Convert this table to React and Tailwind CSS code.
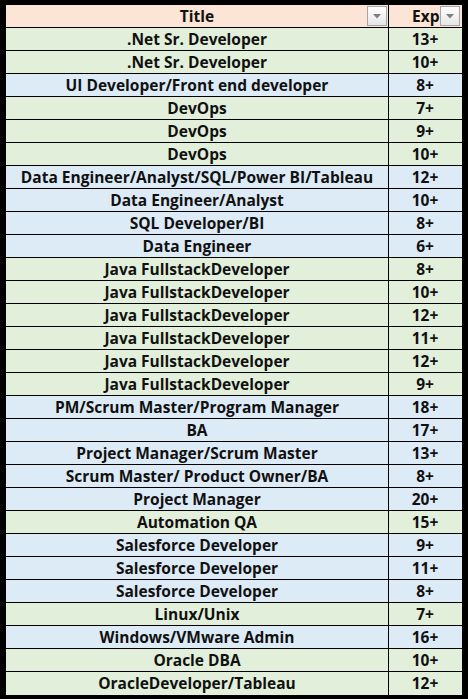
import React from "react";

const G = "bg-[#e2efda]";
const B = "bg-[#ddebf7]";

const rows = [
  [".Net Sr. Developer", "13+", G],
  [".Net Sr. Developer", "10+", G],
  ["UI Developer/Front end developer", "8+", B],
  ["DevOps", "7+", G],
  ["DevOps", "9+", G],
  ["DevOps", "10+", G],
  ["Data Engineer/Analyst/SQL/Power BI/Tableau", "12+", B],
  ["Data Engineer/Analyst", "10+", B],
  ["SQL Developer/BI", "8+", B],
  ["Data Engineer", "6+", B],
  ["Java FullstackDeveloper", "8+", G],
  ["Java FullstackDeveloper", "10+", G],
  ["Java FullstackDeveloper", "12+", G],
  ["Java FullstackDeveloper", "11+", G],
  ["Java FullstackDeveloper", "12+", G],
  ["Java FullstackDeveloper", "9+", G],
  ["PM/Scrum Master/Program Manager", "18+", B],
  ["BA", "17+", B],
  ["Project Manager/Scrum Master", "13+", B],
  ["Scrum Master/ Product Owner/BA", "8+", B],
  ["Project Manager", "20+", B],
  ["Automation QA", "15+", G],
  ["Salesforce Developer", "9+", B],
  ["Salesforce Developer", "11+", B],
  ["Salesforce Developer", "8+", B],
  ["Linux/Unix", "7+", G],
  ["Windows/VMware Admin", "16+", B],
  ["Oracle DBA", "10+", G],
  ["OracleDeveloper/Tableau", "12+", G],
];

// little excel-style filter button
function FilterBtn() {
  return (
    <div className="absolute right-[1px] top-[1px] w-[20px] h-[20px] border border-[#a6a6a6] bg-gradient-to-b from-white to-[#e6e6e6] flex items-center justify-center">
      <svg width="8" height="5" viewBox="0 0 8 5">
        <path d="M0 0 L8 0 L4 4.5 Z" fill="#7f7f7f" />
      </svg>
    </div>
  );
}

export default function App() {
  return (
    <div
      className="w-[468px] h-[699px] bg-black pl-[6px] pr-[6px] pt-[5px] pb-[4px]"
      style={{ fontFamily: "'Open Sans', Arial, sans-serif" }}
    >
      <div className="w-[456px] flex flex-col font-bold text-[15.5px] leading-none text-[#111]">
        {/* header */}
        <div className="flex h-[23px] border-b border-black bg-[#fce4d6]">
          <div className="relative w-[383px] border-r border-black flex items-center justify-center pt-[2px]">
            Title
            <FilterBtn />
          </div>
          <div className="relative w-[72px] flex items-center pl-[23px] pt-[2px]">
            Exp
            <FilterBtn />
          </div>
        </div>

        {rows.map((r, i) => (
          <div
            key={i}
            className={`flex h-[23px] ${i < rows.length - 1 ? "border-b border-black" : ""} ${r[2]}`}
          >
            <div className="w-[383px] border-r border-black flex items-center justify-center whitespace-nowrap pt-[1px]">
              {r[0]}
            </div>
            <div className="w-[72px] flex items-center justify-center pt-[1px]">{r[1]}</div>
          </div>
        ))}
      </div>
    </div>
  );
}
